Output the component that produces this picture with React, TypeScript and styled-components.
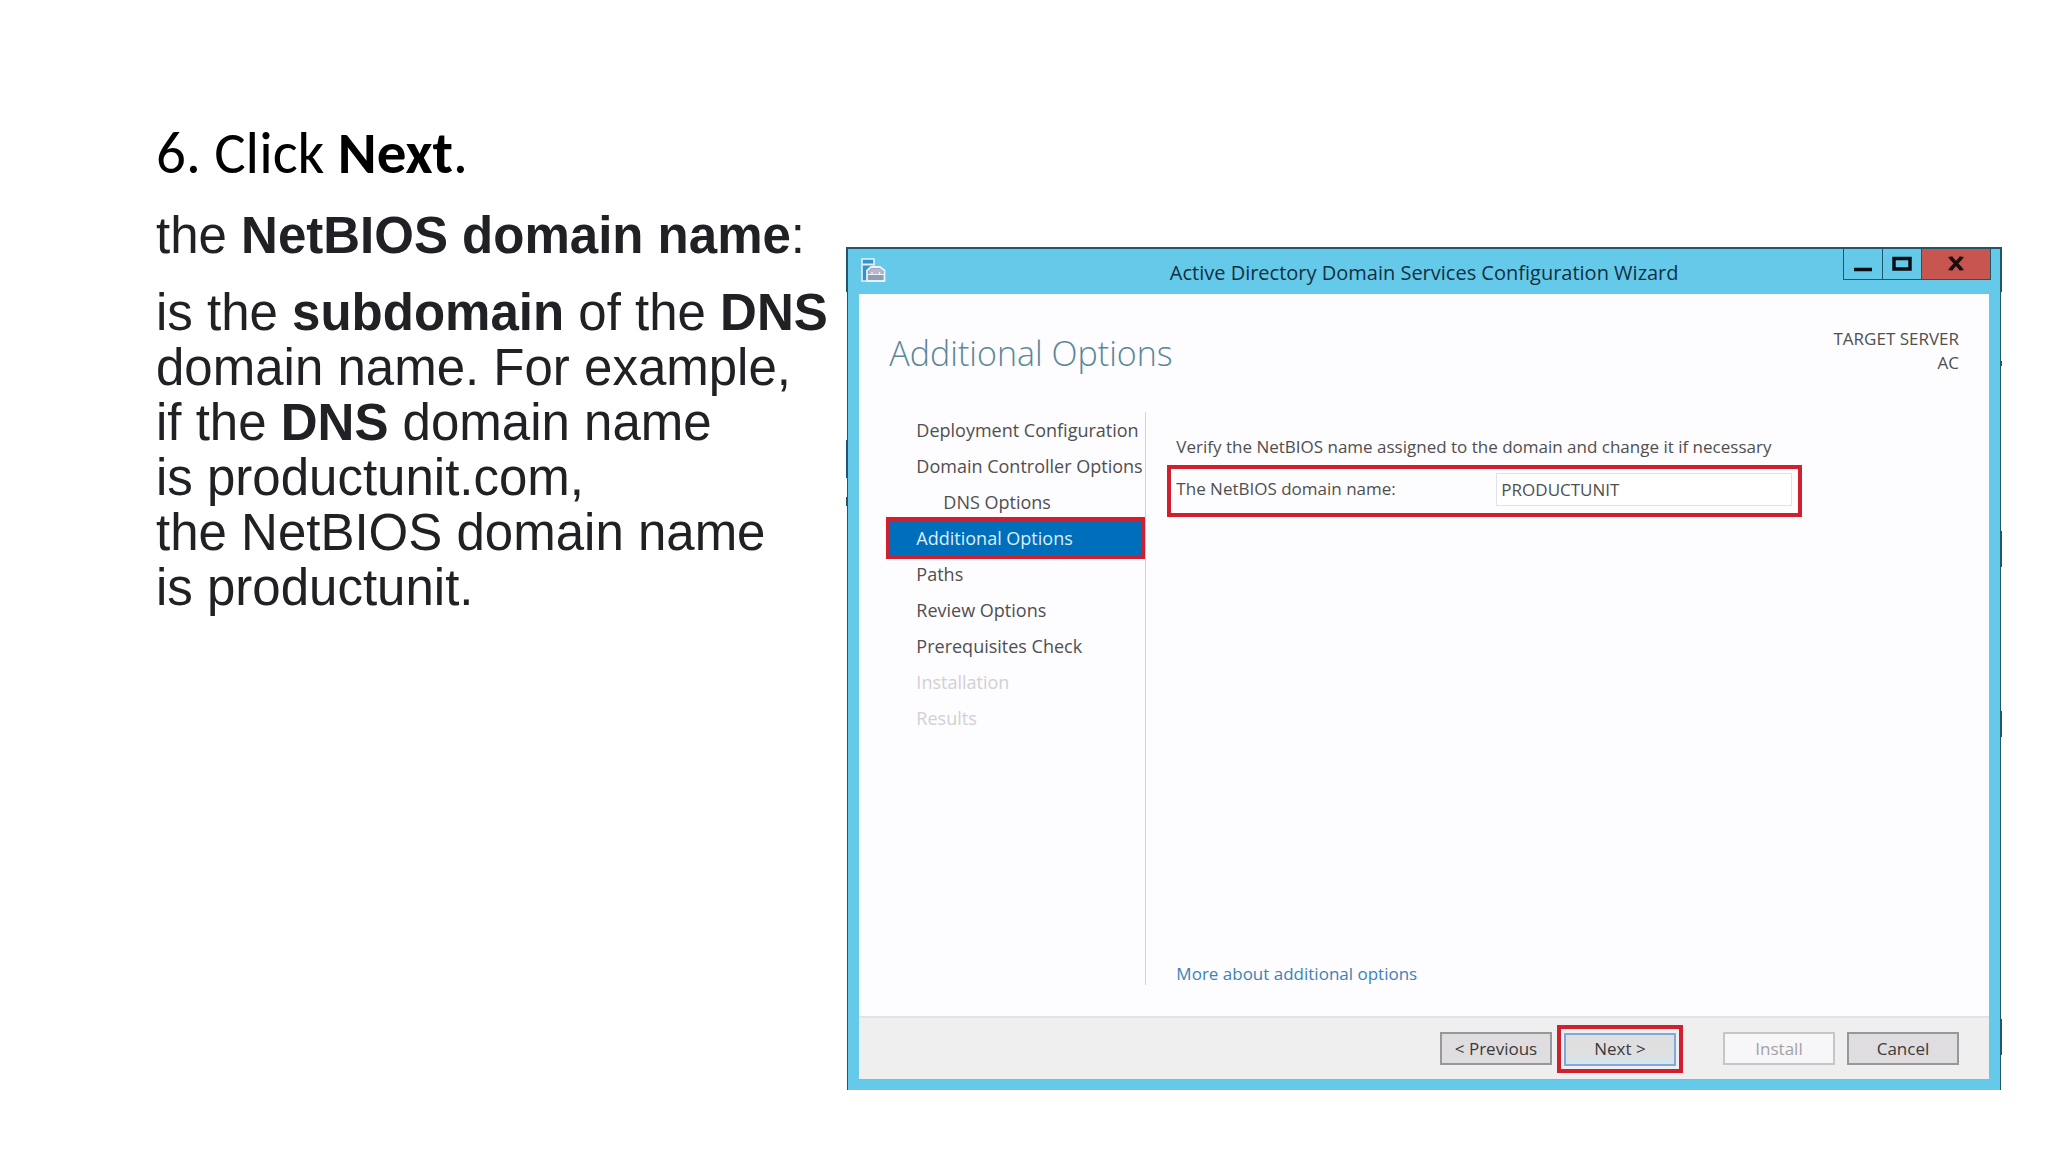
import React from "react";
import styled, { createGlobalStyle, css } from "styled-components";

const color = {
  frame: "#65c9ea",
  edge: "#24566b",
  panel: "#fdfcfe",
  footer: "#f0eff0",
  red: "#d0202f",
  accent: "#006fbb",
  text: "#4f4f4f",
};

const uiFont = `"Segoe UI", "Open Sans", "Noto Sans", sans-serif`;

const GlobalStyle = createGlobalStyle`
  *, *::before, *::after { box-sizing: border-box; }
  body { margin: 0; background: #ffffff; }
`;

const Slide = styled.main`
  display: grid;
  grid-template-columns: minmax(0, 46fr) minmax(0, 77fr);
  align-items: start;
  padding: 120px 46px 63px 156px;
`;

const Notes = styled.section`
  display: flex;
  flex-direction: column;
  color: #202124;
  font: 51px/55px "Liberation Sans", Arial, sans-serif;
`;

const StepTitle = styled.h1`
  margin: 0 0 22px;
  color: #000000;
  font: 400 59px/66px Carlito, Calibri, Lato, sans-serif;
`;

const Note = styled.p`
  margin: 0 0 22px;
  white-space: nowrap;
`;

const Window = styled.section`
  position: relative;
  display: flex;
  flex-direction: column;
  margin: 127px 1px 0;
  padding: 0 11px 10px;
  border: solid ${color.edge};
  border-width: 2px 1px 0;
  background: ${color.frame};
  font: 17px/24px ${uiFont};
  color: ${color.text};

  &::before,
  &::after {
    content: "";
    position: absolute;
    top: -2px;
    bottom: 0;
    width: 1px;
  }
  &::before {
    left: -2px;
    background: linear-gradient(
      ${color.edge} 0 45px, transparent 45px 193px,
      #1d5480 193px 231px, transparent 231px 250px,
      ${color.edge} 250px 259px, transparent 259px
    );
  }
  &::after {
    right: -2px;
    background: linear-gradient(
      ${color.edge} 0 45px, transparent 45px 114px,
      ${color.edge} 114px 119px, transparent 119px 284px,
      #0b5a9c 284px 320px, transparent 320px 464px,
      ${color.edge} 464px 490px, transparent 490px 772px,
      #0b5a9c 772px 808px, transparent 808px
    );
  }
`;

const TitleBar = styled.header`
  display: grid;
  grid-template-columns: 1fr auto 1fr;
  height: 44px;
`;

const AppIcon = styled.svg`
  width: 25px;
  height: 25px;
  margin: 9px 0 0 2px;
`;

const WindowTitle = styled.h2`
  margin: 10px 0 0;
  color: #12303f;
  font: 400 20px/28px ${uiFont};
`;

const WindowControls = styled.div`
  display: flex;
  justify-self: end;
  height: 31px;
  margin-right: -2px;
  border: solid ${color.edge};
  border-width: 0 1px 1px;
`;

const ControlButton = styled.button<{ $close?: boolean }>`
  display: grid;
  place-items: center;
  width: ${(p) => (p.$close ? 68 : 39)}px;
  padding: 0;
  border: 0;
  border-right: ${(p) => (p.$close ? "0" : `1px solid ${color.edge}`)};
  background: ${(p) => (p.$close ? "#c6564f" : "transparent")};

  svg {
    width: 22px;
    height: 18px;
  }
`;

const Panel = styled.div`
  display: flex;
  flex-direction: column;
  border-top: 1px solid #8fb9c8;
  border-bottom: 1px solid #93b3be;
  background: ${color.panel};
`;

const PanelHeader = styled.div`
  display: flex;
  justify-content: space-between;
  align-items: flex-start;
  height: 118px;
  padding: 33px 30px 0;
`;

const PageTitle = styled.h3`
  margin: 4px 0 0;
  color: #5a8799;
  font: 300 34px/44px ${uiFont};
`;

const Target = styled.p`
  margin: 0;
  text-align: right;
`;

const PanelBody = styled.div`
  display: grid;
  grid-template-columns: 287px minmax(0, 1fr);
  padding-bottom: 31px;
`;

const Steps = styled.ol`
  min-height: 573px;
  margin: 0;
  padding: 0 0 0 27px;
  border-right: 1px solid #d3d1d5;
  list-style: none;
  font-size: 18px;
`;

const Step = styled.li<{ $current?: boolean; $nested?: boolean; $disabled?: boolean }>`
  height: 36px;
  padding-left: ${(p) => (p.$nested ? 57 : 30)}px;
  line-height: 36px;
  color: ${(p) => (p.$disabled ? "#d2d0d3" : color.text)};
  white-space: nowrap;

  ${(p) =>
    p.$current &&
    css`
      height: 42px;
      margin: -3px 0;
      padding-left: 26px;
      border: 4px solid ${color.red};
      background: ${color.accent};
      color: #dceefa;
      line-height: 34px;
    `}
`;

const Content = styled.div`
  display: flex;
  flex-direction: column;
  align-items: flex-start;
  padding: 23px 30px 0 21px;
`;

const Prompt = styled.p`
  margin: 0 0 6px;
  padding-left: 9px;
`;

const Field = styled.div`
  display: flex;
  align-items: center;
  justify-content: space-between;
  width: 635px;
  max-width: 100%;
  height: 52px;
  padding: 0 6px 4px 5px;
  border: 4px solid ${color.red};
`;

const FieldInput = styled.input`
  width: 296px;
  height: 33px;
  padding: 0 4px;
  border: 1px solid #e2e1e6;
  background: #ffffff;
  color: ${color.text};
  font: inherit;
`;

const MoreLink = styled.a`
  margin-top: auto;
  padding-left: 9px;
  color: #3d82b5;
  line-height: 22px;
  text-decoration: none;
`;

const PanelFooter = styled.footer`
  display: flex;
  align-items: center;
  justify-content: flex-end;
  height: 63px;
  padding-right: 30px;
  border-top: 2px solid #e4e2e5;
  background: ${color.footer};
`;

const NextHighlight = styled.div`
  margin: 0 40px 0 5px;
  padding: 4px 3px 3px;
  border: 4px solid ${color.red};
`;

const FooterButton = styled.button<{ $primary?: boolean }>`
  display: block;
  width: 112px;
  height: 33px;
  padding: 0;
  border: 2px solid ${(p) => (p.$primary ? "#7fa9dc" : "#97969a")};
  background: ${(p) => (p.$primary ? "linear-gradient(#dfdfe0 60%, #d3e6ef)" : "#dfdddf")};
  color: #3a3a3c;
  font: 17px/24px ${uiFont};

  &:disabled {
    margin-right: 12px;
    border-color: #c6c5c8;
    background: #f7f6f8;
    color: #a3a2a5;
  }
`;

type StepItem = { label: string; current?: boolean; nested?: boolean; disabled?: boolean };

const steps: StepItem[] = [
  { label: "Deployment Configuration" },
  { label: "Domain Controller Options" },
  { label: "DNS Options", nested: true },
  { label: "Additional Options", current: true },
  { label: "Paths" },
  { label: "Review Options" },
  { label: "Prerequisites Check" },
  { label: "Installation", disabled: true },
  { label: "Results", disabled: true },
];

function ServerIcon() {
  return (
    <AppIcon viewBox="0 0 25 25" aria-hidden="true">
      <path d="M1 1h12v8l-6 4v10H1z" fill="#3b8fc8" stroke="#dff3fb" strokeWidth="1.6" />
      <path d="M1.5 6.500h11" stroke="#dff3fb" strokeWidth="2" />
      <path d="M6 12.500l4-3.500h9l4.500 3.500v10.500H6z" fill="#8d9fb3" stroke="#e6f3fa" strokeWidth="1.800" />
      <path d="M8 12.500l3-2h7.500l3 2v3.500H8z" fill="#b9b5cf" />
      <path d="M7 16.500h16M11 14v3M18.500 14v3" stroke="#f0f4fa" strokeWidth="1.200" />
    </AppIcon>
  );
}

export default function App() {
  return (
    <>
      <GlobalStyle />
      <Slide>
        <Notes>
          <StepTitle>
            6. Click <b>Next</b>.
          </StepTitle>
          <Note>
            the <b>NetBIOS domain name</b>:
          </Note>
          <Note>
            is the <b>subdomain</b> of the <b>DNS</b>
            <br />
            domain name. For example,
            <br />
            if the <b>DNS</b> domain name
            <br />
            is productunit.com,
            <br />
            the NetBIOS domain name
            <br />
            is productunit.
          </Note>
        </Notes>

        <Window>
          <TitleBar>
            <ServerIcon />
            <WindowTitle>Active Directory Domain Services Configuration Wizard</WindowTitle>
            <WindowControls>
              <ControlButton type="button" aria-label="Minimize">
                <svg viewBox="0 0 22 18" aria-hidden="true">
                  <path d="M2 14.500h18" stroke="#0b0f12" strokeWidth="3.500" />
                </svg>
              </ControlButton>
              <ControlButton type="button" aria-label="Maximize">
                <svg viewBox="0 0 22 18" aria-hidden="true">
                  <rect x="3" y="3.500" width="16" height="10.500" fill="none" stroke="#0b0f12" strokeWidth="3.500" />
                </svg>
              </ControlButton>
              <ControlButton type="button" aria-label="Close" $close>
                <svg viewBox="0 0 22 18" aria-hidden="true">
                  <path d="M5.500 2.500L16.500 14.500M16.500 2.500L5.500 14.500" stroke="#1c0d0d" strokeWidth="3.500" />
                  <path d="M3.500 2.500h4.500M14 2.500h4.500M3.500 14.500h4.500M14 14.500h4.500" stroke="#1c0d0d" strokeWidth="1.500" />
                </svg>
              </ControlButton>
            </WindowControls>
          </TitleBar>

          <Panel>
            <PanelHeader>
              <PageTitle>Additional Options</PageTitle>
              <Target>
                TARGET SERVER
                <br />
                AC
              </Target>
            </PanelHeader>

            <PanelBody>
              <Steps>
                {steps.map((s) => (
                  <Step
                    key={s.label}
                    $current={s.current}
                    $nested={s.nested}
                    $disabled={s.disabled}
                    aria-current={s.current ? "step" : undefined}
                  >
                    {s.label}
                  </Step>
                ))}
              </Steps>
              <Content>
                <Prompt>Verify the NetBIOS name assigned to the domain and change it if necessary</Prompt>
                <Field>
                  <label htmlFor="netbios">The NetBIOS domain name:</label>
                  <FieldInput id="netbios" type="text" defaultValue="PRODUCTUNIT" />
                </Field>
                <MoreLink href="#more">More about additional options</MoreLink>
              </Content>
            </PanelBody>

            <PanelFooter>
              <FooterButton type="button">&lt; Previous</FooterButton>
              <NextHighlight>
                <FooterButton type="button" $primary>
                  Next &gt;
                </FooterButton>
              </NextHighlight>
              <FooterButton type="button" disabled>
                Install
              </FooterButton>
              <FooterButton type="button">Cancel</FooterButton>
            </PanelFooter>
          </Panel>
        </Window>
      </Slide>
    </>
  );
}
